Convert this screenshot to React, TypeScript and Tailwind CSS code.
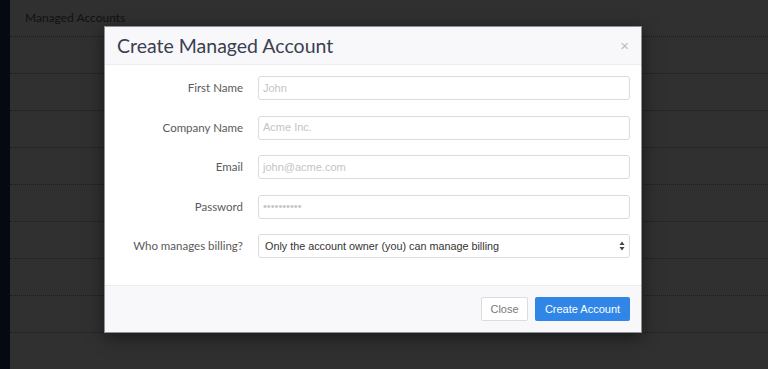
import React from "react";

const rows = [0, 1, 2, 3, 4, 5, 6, 7];

function Field({ label, placeholder }: { label: string; placeholder: string }) {
  return (
    <div className="flex items-center h-6">
      <div className="w-[153px] pr-[15px] text-right text-[11.5px] text-[#5a5a5a] font-['Lato',sans-serif] shrink-0">
        {label}
      </div>
      <div className="flex-1 h-6 border border-[#dcdcdc] rounded-[3px] bg-white flex items-center pl-[4px] text-[11px] text-[#c4c4c4] font-['Liberation_Sans',Arial,sans-serif]">
        {placeholder}
      </div>
    </div>
  );
}

export default function App() {
  return (
    <div className="relative w-[768px] h-[369px] overflow-hidden bg-[#303030] flex">
      <div className="w-[10px] h-full bg-[#050a12] shrink-0" />
      <div className="flex-1 flex flex-col">
        <div className="h-[37px] pl-[15px] flex items-center text-[12px] text-[#111] font-['Lato',sans-serif] border-b border-dotted border-[#1a1a1a]">
          Managed Accounts
        </div>
        {rows.map((r) => (
          <div key={r} className="h-[37px] border-b border-dotted border-[#1c1c1c] shrink-0" />
        ))}
      </div>

      <div className="absolute left-[104px] top-[26px] w-[538px] h-[307px] bg-white border border-[#8d9096] shadow-[0_4px_16px_rgba(0,0,0,0.5)] flex flex-col">
        <div className="h-[38px] bg-[#f8f8fa] border-b border-[#ececf0] flex items-center justify-between pl-[12px] pr-[12px] shrink-0">
          <div className="text-[19.5px] text-[#3a3f51] font-['Lato',sans-serif] leading-none">
            Create Managed Account
          </div>
          <div className="text-[15px] text-[#bbb] font-['Liberation_Sans',Arial,sans-serif] leading-none">×</div>
        </div>
        <div className="flex-1 pt-[11px] pr-[11px] flex flex-col gap-[15.5px]">
          <Field label="First Name" placeholder="John" />
          <Field label="Company Name" placeholder="Acme Inc." />
          <Field label="Email" placeholder="john@acme.com" />
          <Field label="Password" placeholder="••••••••••" />
          <div className="flex items-center h-6">
            <div className="w-[153px] pr-[15px] text-right text-[11.5px] text-[#5a5a5a] font-['Lato',sans-serif] shrink-0">
              Who manages billing?
            </div>
            <div className="flex-1 h-6 border border-[#dcdcdc] rounded-[3px] bg-white flex items-center justify-between pl-[6px] pr-[4px] text-[10.8px] text-[#333] font-['Liberation_Sans',Arial,sans-serif]">
              <span>Only the account owner (you) can manage billing</span>
              <svg width="6" height="10" viewBox="0 0 6 10">
                <path d="M3 0.5 L5.5 4 L0.5 4 Z" fill="#444" />
                <path d="M3 9.5 L5.5 6 L0.5 6 Z" fill="#444" />
              </svg>
            </div>
          </div>
        </div>
        <div className="h-[47px] bg-[#f8f8fa] border-t border-dotted border-[#e2e2e6] flex items-center justify-end gap-[7px] pr-[11px] shrink-0">
          <div className="h-[24px] w-[47px] border border-[#dcdcdc] bg-white rounded-[2px] flex items-center justify-center text-[11px] text-[#777] font-['Liberation_Sans',Arial,sans-serif]">
            Close
          </div>
          <div className="h-[24px] w-[95px] bg-[#2f86e6] rounded-[2px] flex items-center justify-center text-[11px] text-white font-['Liberation_Sans',Arial,sans-serif]">
            Create Account
          </div>
        </div>
      </div>
    </div>
  );
}
